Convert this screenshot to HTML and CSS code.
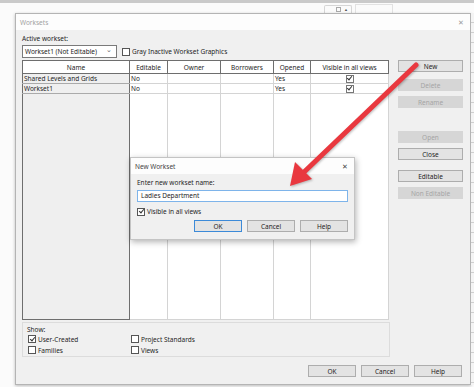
FILE: index.html
```html
<!DOCTYPE html>
<html lang="en">
<head>
    <meta charset="UTF-8">
    <title>Worksets</title>
    <link rel="stylesheet" href="styles.css">
</head>
<body>
    <div class="topbar">
        <div class="tab-widget"><span class="tw-icon"></span><span class="tw-up">&#9650;</span></div>
        <div class="tab-blank"></div>
    </div>
    <div class="stage">
        <div class="dialog">
            <div class="titlebar">
                <span class="title">Worksets</span>
                <span class="close">&#10005;</span>
            </div>
            <div class="dialog-body">
                <div class="label">Active workset:</div>
                <div class="active-row">
                    <div class="select">Workset1 (Not Editable)<span class="caret">&#8964;</span></div>
                    <span class="cb"></span>
                    <span class="cb-label">Gray Inactive Workset Graphics</span>
                </div>
                <div class="main">
                    <table class="grid">
                        <colgroup>
                            <col style="width:107px"><col style="width:38px"><col style="width:53px">
                            <col style="width:53px"><col style="width:37px"><col style="width:78px">
                        </colgroup>
                        <thead>
                            <tr>
                                <th>Name</th><th>Editable</th><th>Owner</th>
                                <th>Borrowers</th><th>Opened</th><th>Visible in all views</th>
                            </tr>
                        </thead>
                        <tbody>
                            <tr>
                                <td class="name">Shared Levels and Grids</td><td>No</td><td></td><td></td><td>Yes</td>
                                <td class="center"><span class="cb checked"></span></td>
                            </tr>
                            <tr>
                                <td class="name">Workset1</td><td>No</td><td></td><td></td><td>Yes</td>
                                <td class="center"><span class="cb checked"></span></td>
                            </tr>
                            <tr class="filler">
                                <td class="name"></td><td></td><td></td><td></td><td></td><td></td>
                            </tr>
                        </tbody>
                    </table>
                    <div class="side">
                        <button class="btn">New</button>
                        <button class="btn off b-delete">Delete</button>
                        <button class="btn off b-rename">Rename</button>
                        <button class="btn off b-open">Open</button>
                        <button class="btn b-close">Close</button>
                        <button class="btn b-edit">Editable</button>
                        <button class="btn off b-nonedit">Non Editable</button>
                    </div>
                </div>
                <div class="show">
                    <div class="show-title">Show:</div>
                    <div class="show-grid">
                        <label><span class="cb checked"></span>User-Created</label>
                        <label><span class="cb"></span>Project Standards</label>
                        <label><span class="cb"></span>Families</label>
                        <label><span class="cb"></span>Views</label>
                    </div>
                </div>
                <div class="footer">
                    <button class="btn wide">OK</button>
                    <button class="btn wide">Cancel</button>
                    <button class="btn wide">Help</button>
                </div>
            </div>
        </div>
        <div class="backdrop"></div>
    </div>

    <div class="popup">
        <div class="titlebar small">
            <span class="title dark">New Workset</span>
            <span class="close dark">&#10005;</span>
        </div>
        <div class="popup-body">
            <div class="label">Enter new workset name:</div>
            <div class="input">Ladies Department</div>
            <label class="popup-check"><span class="cb checked"></span>Visible in all views</label>
            <div class="popup-footer">
                <button class="btn wide default">OK</button>
                <button class="btn wide">Cancel</button>
                <button class="btn wide">Help</button>
            </div>
        </div>
    </div>

    <svg class="arrow" width="474" height="387" viewBox="0 0 474 387">
        <line x1="416" y1="65" x2="302" y2="174" stroke="#e9383f" stroke-width="5" stroke-linecap="round"/>
        <polygon points="290,186 295,162 312,179" fill="#e9383f"/>
    </svg>
</body>
</html>
```

FILE: styles.css
```css
body {
    margin: 0;
    width: 474px;
    height: 387px;
    overflow: hidden;
    position: relative;
    background: #fbfbfb;
    font-family: "Noto Sans", "Open Sans", sans-serif;
    font-size: 6.5px;
    color: #1e1e1e;
}
.topbar {
    height: 13px;
    border-top: 3px solid #cacaca;
    box-sizing: border-box;
    display: flex;
    align-items: flex-end;
    padding-left: 324px;
    gap: 3px;
}
.tab-widget {
    width: 28px;
    height: 8px;
    border: 1px solid #d6d6d6;
    border-bottom: none;
    border-radius: 2px 2px 0 0;
    display: flex;
    justify-content: flex-end;
    align-items: center;
    gap: 3px;
    padding-right: 3px;
    box-sizing: border-box;
    font-size: 4px;
    color: #555;
}
.tw-icon {
    width: 3px;
    height: 3px;
    border: 1px solid #aaa;
}
.tab-blank {
    width: 36px;
    height: 8px;
    border: 1px solid #e2e2e2;
    border-bottom: none;
}
.stage {
    display: flex;
    padding-left: 15px;
}
.dialog {
    width: 456px;
    height: 372px;
    border: 1px solid #b4b4b4;
    box-sizing: border-box;
    background: #f0f0f0;
    box-shadow: 0 1px 3px rgba(0, 0, 0, 0.25);
    display: flex;
    flex-direction: column;
}
.backdrop {
    flex: 1;
    background: repeating-linear-gradient(to bottom, #f4f4f4 0, #f4f4f4 9px, #cfcfcf 9px, #cfcfcf 10px);
}
.titlebar {
    height: 16px;
    background: #fdfdfd;
    display: flex;
    align-items: center;
    justify-content: space-between;
    padding: 0 6px 0 4px;
    flex-shrink: 0;
}
.title {
    color: #a2a2a2;
    font-size: 6.5px;
}
.close {
    color: #9a9a9a;
    font-size: 7px;
}
.dark {
    color: #444;
}
.dialog-body {
    flex: 1;
    padding: 3px 8px 0 6px;
    display: flex;
    flex-direction: column;
}
.label {
    height: 10px;
    line-height: 10px;
    margin-top: 1px;
}
.active-row {
    display: flex;
    align-items: center;
    height: 13px;
    margin-top: 1px;
}
.select {
    width: 95px;
    height: 13px;
    box-sizing: border-box;
    border: 1px solid #7a7a7a;
    background: #fff;
    line-height: 11px;
    padding-left: 2px;
    position: relative;
}
.caret {
    position: absolute;
    right: 4px;
    top: -2px;
    color: #666;
    font-size: 7px;
}
.cb {
    display: inline-block;
    width: 6px;
    height: 6px;
    border: 1px solid #333;
    background: #fff;
    position: relative;
    flex-shrink: 0;
}
.cb.checked::after {
    content: "";
    position: absolute;
    left: 1.5px;
    top: -0.5px;
    width: 2px;
    height: 4px;
    border: solid #333;
    border-width: 0 1px 1px 0;
    transform: rotate(40deg);
}
.active-row .cb {
    margin-left: 5px;
    border-color: #555;
}
.cb-label {
    margin-left: 2px;
}
.main {
    display: flex;
    margin-top: 2px;
    height: 260px;
}
.grid {
    width: 366px;
    height: 260px;
    table-layout: fixed;
    border-collapse: collapse;
    background: #fff;
    border: 1px solid #d0d0d0;
}
.grid th {
    height: 12px;
    line-height: 11px;
    font-weight: normal;
    border: 1px solid #6e6e6e;
    background: #fff;
    padding: 0;
    text-align: center;
}
.grid td {
    height: 9px;
    padding: 0 1px;
    border: 1px solid #d4d4d4;
    white-space: nowrap;
    overflow: hidden;
    line-height: 8px;
}
.grid td.name {
    background: #efefef;
    border-left: 1px solid #6e6e6e;
    border-right: 1px solid #6e6e6e;
}
.grid tbody tr:first-child td.name,
.grid tbody tr:nth-child(2) td.name {
    border-bottom: 1px solid #aaa;
}
.grid .filler td {
    height: auto;
}
.grid .filler td.name {
    border-bottom: 1px solid #6e6e6e;
}
.center {
    text-align: center;
}
.center .cb {
    border-color: #777;
    vertical-align: middle;
}
.side {
    margin-left: 9px;
    width: 65px;
    display: flex;
    flex-direction: column;
}
.btn {
    font-family: inherit;
    font-size: 6.5px;
    color: #1e1e1e;
    height: 12px;
    padding: 0;
    border: 1px solid #adadad;
    background: #e3e3e3;
    box-sizing: border-box;
    flex-shrink: 0;
}
.side .btn {
    width: 65px;
}
.btn.off {
    background: #d6d6d6;
    border-color: #d6d6d6;
    color: #a5a5a5;
}
.b-delete { margin-top: 7px; }
.b-rename { margin-top: 5px; }
.b-open { margin-top: 23px; }
.b-close { margin-top: 5px; }
.b-edit { margin-top: 10px; }
.b-nonedit { margin-top: 5px; }
.show {
    margin-top: 2px;
    width: 368px;
    height: 35px;
    box-sizing: border-box;
    border: 1px solid #dcdcdc;
    padding: 2px 0 0 4px;
}
.show-title {
    height: 9px;
    line-height: 9px;
}
.show-grid {
    display: grid;
    grid-template-columns: 103px 1fr;
    row-gap: 3px;
    margin-top: 1px;
    padding-left: 1px;
}
.show-grid label {
    display: flex;
    align-items: center;
    gap: 2px;
    height: 8px;
}
.show-grid .cb {
    border-color: #555;
}
.footer {
    display: flex;
    justify-content: flex-end;
    gap: 5px;
    margin-top: 8px;
}
.btn.wide {
    width: 48px;
}
.popup {
    position: absolute;
    left: 130px;
    top: 157px;
    width: 225px;
    height: 83px;
    background: #f0f0f0;
    border: 1px solid #c4c4c4;
    box-sizing: border-box;
    box-shadow: 1px 2px 6px rgba(0, 0, 0, 0.3);
    display: flex;
    flex-direction: column;
}
.titlebar.small {
    height: 16px;
    padding: 0 6px 0 4px;
}
.popup-body {
    padding: 3px 6px 0 6px;
}
.input {
    height: 12px;
    box-sizing: border-box;
    border: 1px solid #7eb4ea;
    background: #fff;
    line-height: 10px;
    padding-left: 3px;
    margin-top: 2px;
}
.popup-check {
    display: flex;
    align-items: center;
    gap: 2px;
    height: 9px;
    margin-top: 5px;
}
.popup-check .cb {
    border-color: #555;
}
.popup-footer {
    display: flex;
    justify-content: flex-end;
    gap: 5px;
    margin-top: 4px;
}
.btn.default {
    border: 1px solid #3c8ad8;
}
.arrow {
    position: absolute;
    left: 0;
    top: 0;
    pointer-events: none;
    filter: drop-shadow(1px 1px 1px rgba(0, 0, 0, 0.25));
}
```
